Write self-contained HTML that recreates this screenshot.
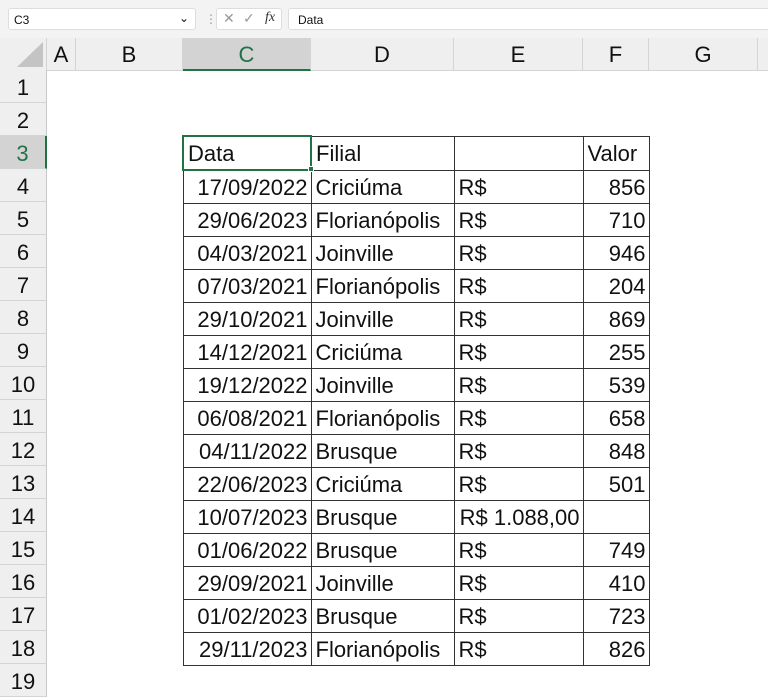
<!DOCTYPE html>
<html><head><meta charset="utf-8"><style>
*{margin:0;padding:0;box-sizing:border-box}
body{width:768px;height:697px;overflow:hidden;background:#fff;font-family:"Liberation Sans",sans-serif;position:relative;color:#111}
.top{position:absolute;left:0;top:0;width:768px;height:38px;background:#f3f3f3}
.nb{position:absolute;left:8px;top:8px;width:188px;height:22px;background:#fff;border:1px solid #ddd;border-radius:3px;font-size:12px;padding:4px 5px}
.fx{position:absolute;left:216px;top:8px;width:66px;height:22px;background:#fff;border:1px solid #ddd;border-radius:3px;font-size:14px;color:#999}
.fb{position:absolute;left:288px;top:8px;width:490px;height:22px;background:#fff;border:1px solid #ddd;border-radius:3px;font-size:12px;padding:4px 9px}
.ch{position:absolute;top:38px;height:33px;background:#efefef;border-bottom:1px solid #d4d4d4;border-right:1px solid #d4d4d4;font-size:22px;text-align:center;line-height:34px}
.rh{position:absolute;left:0;width:47px;height:33px;background:#efefef;border-bottom:1px solid #d4d4d4;border-right:1px solid #c8c8c8;font-size:22px;text-align:center;line-height:36px}
table{position:absolute;left:182px;top:135px;border-collapse:collapse;font-size:22px;table-layout:fixed;width:466px}
td{border:1px solid #333;height:32px;padding:2px 3px 0 4px;white-space:nowrap;line-height:30px;overflow:hidden}
td.r{text-align:right}
</style></head><body>
<div class="top"></div>
<div class="nb">C3<span style="position:absolute;right:6px;top:2px;font-size:12px">&#8964;</span></div>
<div style="position:absolute;left:205px;top:12px;color:#999;font-size:12px">&#8942;</div>
<div class="fx"><span style="position:absolute;left:6px;top:1px">&#x2715;</span><span style="position:absolute;left:26px;top:1px">&#x2713;</span><i style="position:absolute;left:48px;top:1px;color:#333;font-family:'Liberation Serif',serif">fx</i></div>
<div class="fb">Data</div>
<div class="ch" style="left:0;width:47px"><svg width="47" height="33" style="position:absolute;left:0;top:0"><polygon points="43,4 43,29 17,29" fill="#c4c4c4"/></svg></div>
<div class="ch" style="left:47px;width:29px">A</div>
<div class="ch" style="left:76px;width:107px">B</div>
<div class="ch" style="left:183px;width:128px;background:#d3d3d3;color:#217346;border-bottom:2px solid #217346">C</div>
<div class="ch" style="left:311px;width:143px">D</div>
<div class="ch" style="left:454px;width:129px">E</div>
<div class="ch" style="left:583px;width:66px">F</div>
<div class="ch" style="left:649px;width:109px">G</div>
<div class="ch" style="left:758px;width:20px"></div>
<div class="rh" style="top:70px">1</div>
<div class="rh" style="top:103px">2</div>
<div class="rh" style="top:136px;background:#d3d3d3;color:#217346;border-right:2px solid #217346">3</div>
<div class="rh" style="top:169px">4</div>
<div class="rh" style="top:202px">5</div>
<div class="rh" style="top:235px">6</div>
<div class="rh" style="top:268px">7</div>
<div class="rh" style="top:301px">8</div>
<div class="rh" style="top:334px">9</div>
<div class="rh" style="top:367px">10</div>
<div class="rh" style="top:400px">11</div>
<div class="rh" style="top:433px">12</div>
<div class="rh" style="top:466px">13</div>
<div class="rh" style="top:499px">14</div>
<div class="rh" style="top:532px">15</div>
<div class="rh" style="top:565px">16</div>
<div class="rh" style="top:598px">17</div>
<div class="rh" style="top:631px">18</div>
<div class="rh" style="top:664px">19</div>
<table>
<colgroup><col style="width:128px"><col style="width:143px"><col style="width:129px"><col style="width:66px"></colgroup>
<tr><td style="border:2px solid #217346">Data</td><td>Filial</td><td></td><td>Valor</td></tr>
<tr><td class="r">17/09/2022</td><td>Criciúma</td><td>R$</td><td class="r">856</td></tr>
<tr><td class="r">29/06/2023</td><td>Florianópolis</td><td>R$</td><td class="r">710</td></tr>
<tr><td class="r">04/03/2021</td><td>Joinville</td><td>R$</td><td class="r">946</td></tr>
<tr><td class="r">07/03/2021</td><td>Florianópolis</td><td>R$</td><td class="r">204</td></tr>
<tr><td class="r">29/10/2021</td><td>Joinville</td><td>R$</td><td class="r">869</td></tr>
<tr><td class="r">14/12/2021</td><td>Criciúma</td><td>R$</td><td class="r">255</td></tr>
<tr><td class="r">19/12/2022</td><td>Joinville</td><td>R$</td><td class="r">539</td></tr>
<tr><td class="r">06/08/2021</td><td>Florianópolis</td><td>R$</td><td class="r">658</td></tr>
<tr><td class="r">04/11/2022</td><td>Brusque</td><td>R$</td><td class="r">848</td></tr>
<tr><td class="r">22/06/2023</td><td>Criciúma</td><td>R$</td><td class="r">501</td></tr>
<tr><td class="r">10/07/2023</td><td>Brusque</td><td class="r">R$ 1.088,00</td><td></td></tr>
<tr><td class="r">01/06/2022</td><td>Brusque</td><td>R$</td><td class="r">749</td></tr>
<tr><td class="r">29/09/2021</td><td>Joinville</td><td>R$</td><td class="r">410</td></tr>
<tr><td class="r">01/02/2023</td><td>Brusque</td><td>R$</td><td class="r">723</td></tr>
<tr><td class="r">29/11/2023</td><td>Florianópolis</td><td>R$</td><td class="r">826</td></tr>
</table>
<div style="position:absolute;left:308px;top:166px;width:6px;height:6px;background:#217346;border:1px solid #fff"></div>
</body></html>
